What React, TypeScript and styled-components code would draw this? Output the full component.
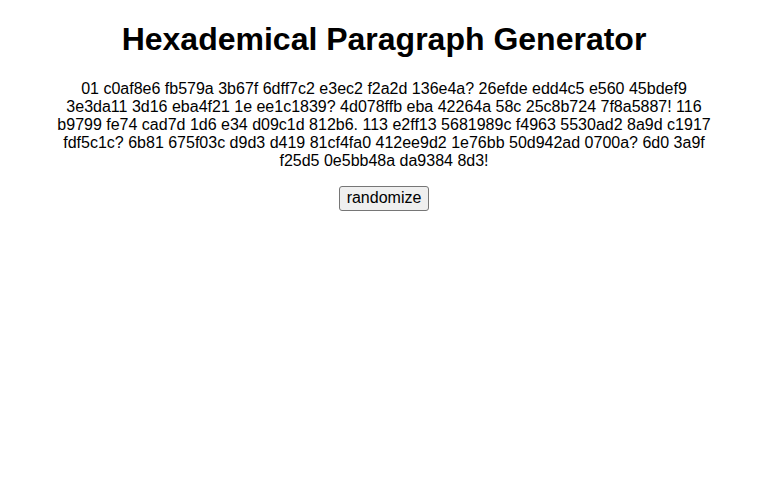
import React, { useState } from "react";
import styled, { createGlobalStyle } from "styled-components";

const GlobalStyle = createGlobalStyle`
  body {
    margin: 0 8px 8px;
    font-family: "Liberation Sans", Arial, sans-serif;
    color: #000;
    background: #fff;
  }
`;

const Page = styled.div`
  text-align: center;
`;

const Title = styled.h1`
  font-size: 32px;
  font-weight: 700;
  margin: 21.44px 0;
`;

const Paragraph = styled.p`
  font-size: 16px;
  line-height: 18px;
  max-width: 660px;
  margin: 16px auto;
`;

const Button = styled.button`
  font-family: "Liberation Sans", Arial, sans-serif;
  font-size: 16px;
  line-height: 18px;
  color: #000;
  background: #efefef;
  border: 1px solid #767676;
  border-radius: 3px;
  padding: 2px 7px 3px;
  cursor: pointer;
`;

const initialText =
  "01 c0af8e6 fb579a 3b67f 6dff7c2 e3ec2 f2a2d 136e4a? 26efde edd4c5 e560 45bdef9 3e3da11 3d16 eba4f21 1e ee1c1839? 4d078ffb eba 42264a 58c 25c8b724 7f8a5887! 116 b9799 fe74 cad7d 1d6 e34 d09c1d 812b6. 113 e2ff13 5681989c f4963 5530ad2 8a9d c1917 fdf5c1c? 6b81 675f03c d9d3 d419 81cf4fa0 412ee9d2 1e76bb 50d942ad 0700a? 6d0 3a9f f25d5 0e5bb48a da9384 8d3!";

function hexWord() {
  const len = 2 + Math.floor(Math.random() * 7);
  let s = "";
  for (let i = 0; i < len; i++) s += Math.floor(Math.random() * 16).toString(16);
  return s;
}

function makeParagraph() {
  const words: string[] = [];
  const count = 50 + Math.floor(Math.random() * 10);
  for (let i = 0; i < count; i++) {
    let w = hexWord();
    if (Math.random() < 0.1) w += [".", "?", "!"][Math.floor(Math.random() * 3)];
    words.push(w);
  }
  return words.join(" ").replace(/[^.?!]$/, (c) => c + "!");
}

export default function App() {
  const [text, setText] = useState(initialText);

  return (
    <Page>
      <GlobalStyle />
      <Title>Hexademical Paragraph Generator</Title>
      <Paragraph>{text}</Paragraph>
      <Button onClick={() => setText(makeParagraph())}>randomize</Button>
    </Page>
  );
}
